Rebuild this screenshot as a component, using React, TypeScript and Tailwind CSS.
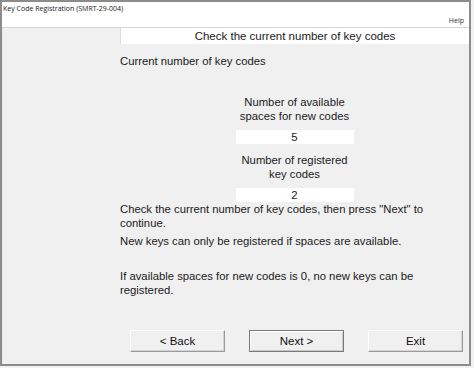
import React from "react";

const btn =
    "w-[95px] h-[22px] flex items-center justify-center text-[11.5px] text-[#111] bg-[#f0f0f0] border border-t-white border-l-white border-r-[#9a9a9a] border-b-[#9a9a9a] shadow-[inset_-1px_-1px_0_#d4d4d4]";

export default function App() {
    return (
        <div className="w-[474px] h-[368px] bg-[#f2f2f2] font-['Liberation_Sans',Arial,sans-serif] text-[#1a1a1a]">
            <div className="w-[471px] h-[366px] border-2 border-[#8c8c8c] flex flex-col">
                {/* title bar */}
                <div className="h-[13px] bg-white px-[1px] text-[7px] leading-[13px] text-[#222] font-['Open_Sans',sans-serif]">
                    Key Code Registration (SMRT-29-004)
                </div>
                {/* menu */}
                <div className="h-[13px] bg-white border-b border-[#d6d6d6] flex justify-end items-end pr-[5px] text-[7px] leading-[12px] text-[#333] font-['Open_Sans',sans-serif]">
                    Help
                </div>

                <div className="flex-1 flex bg-[#f0f0f0] border-l border-[#e6e6e6]">
                    <div className="w-[117px] shrink-0" />
                    <div className="flex-1 flex flex-col text-[11.3px] leading-[14px]">
                        <div className="h-[16px] bg-white border-l border-[#dcdcdc] text-center leading-[17px] text-[11.5px]">
                            Check the current number of key codes
                        </div>
                        <p className="mt-[10px]">Current number of key codes</p>

                        <div className="flex flex-col items-center mt-[27px]">
                            <p className="text-center">Number of available<br />spaces for new codes</p>
                            <div className="mt-[7px] w-[118px] h-[14px] bg-white text-center leading-[15px]">5</div>
                            <p className="text-center mt-[9px]">Number of registered<br />key codes</p>
                            <div className="mt-[7px] w-[118px] h-[14px] bg-white text-center leading-[15px]">2</div>
                        </div>

                        <p>Check the current number of key codes, then press "Next" to<br />continue.</p>
                        <p className="mt-[4px]">New keys can only be registered if spaces are available.</p>
                        <p className="mt-[21px]">If available spaces for new codes is 0, no new keys can be<br />registered.</p>

                        <div className="mt-auto mb-[12px] flex gap-[24px] pl-[10px]">
                            <button className={btn}>&lt; Back</button>
                            <button className="w-[95px] h-[22px] flex items-center justify-center text-[11.5px] text-[#111] bg-[#f0f0f0] border border-[#7a7a7a] shadow-[inset_1px_1px_0_#fff,inset_-1px_-1px_0_#c8c8c8]">
                                Next &gt;
                            </button>
                            <button className={btn}>Exit</button>
                        </div>
                    </div>
                </div>
            </div>
        </div>
    );
}
